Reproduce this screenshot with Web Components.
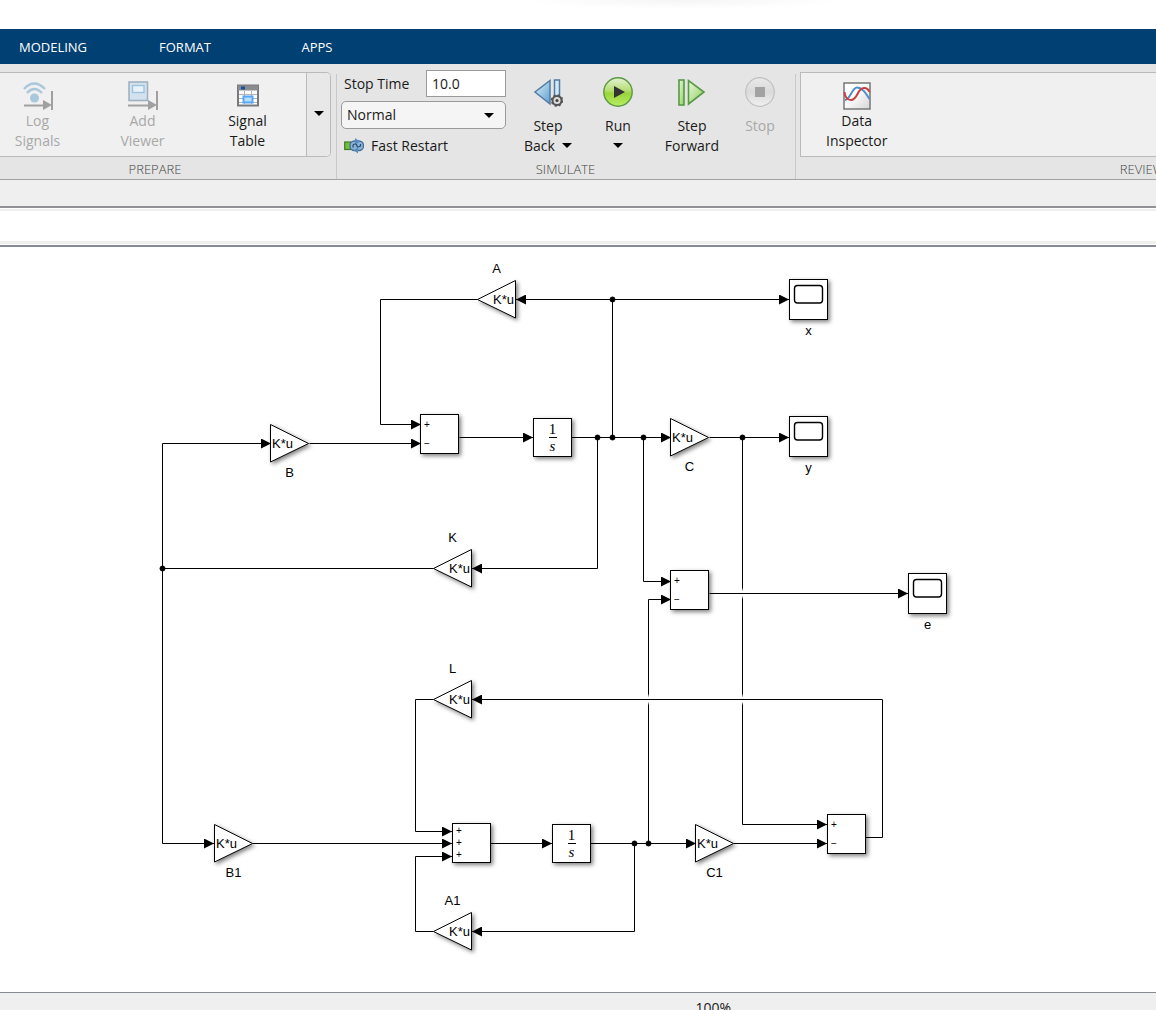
<!DOCTYPE html>
<html lang="en">
<head>
<meta charset="utf-8">
<title>Simulink</title>
<style>
html, body{
    height: 100%;
    margin: 0;
}

body{
    font-family: "Open Sans", "Noto Sans", sans-serif;
    font-size: 14px;
    line-height: 20px;
    color: #1a1a1a;
    background: #fff;
    overflow: hidden;
}

svg{
    display: block;
}
</style>
</head>
<body>
<model-window>
    <tab-strip slot="tabs">
        <a href="#modeling">MODELING</a>
        <a href="#format">FORMAT</a>
        <a href="#apps">APPS</a>
    </tab-strip>

    <tool-strip slot="tools">
        <tool-group class="prepare" caption="PREPARE">
            <tool-gallery more>
                <tool-button disabled>
                    <svg slot="icon" width="30" height="30" viewBox="0 0 30 30" fill="none">
                        <path d="M1 8Q11-3 22 8" stroke="#a9c8dc" stroke-width="2.4"/>
                        <path d="M4 12Q11 4 19 12" stroke="#a9c8dc" stroke-width="2.4"/>
                        <circle cx="11.500" cy="17" r="4.500" fill="#a9c8dc"/>
                        <path d="M1 24.500H22M29 10V29" stroke="#a0a0a0" stroke-width="2"/>
                        <path d="M20 19v10l9-5z" fill="#a0a0a0"/>
                    </svg>
                    Log<br>Signals
                </tool-button>
                <tool-button disabled>
                    <svg slot="icon" width="30" height="30" viewBox="0 0 30 30" fill="none">
                        <rect x="1" y="1" width="18.500" height="18.500" fill="#d3e2ee" stroke="#a0b2c0" stroke-width="1.600"/>
                        <rect x="4.500" y="4.500" width="11.500" height="7" fill="#e9f2f8" stroke="#9bc3dd" stroke-width="1.400"/>
                        <path d="M0 24.500H22M29 10V29" stroke="#a0a0a0" stroke-width="2"/>
                        <path d="M20 19v10l9-5z" fill="#a0a0a0"/>
                    </svg>
                    Add<br>Viewer
                </tool-button>
                <tool-button>
                    <svg slot="icon" width="30" height="30" viewBox="0 0 30 30" fill="none">
                        <rect x="5" y="4.500" width="20" height="20" fill="#fff" stroke="#77797c" stroke-width="2"/>
                        <path d="M5 4.500h20v5H5z" fill="#8a8c90"/>
                        <path d="M8 5.500h4v3H8z" fill="#164f9a"/>
                        <path d="M6 13.500H24M6 17.500H24M6 21.500H24M11.500 10V24M18.500 10V24" stroke="#b3b3b8"/>
                        <rect x="10.500" y="15.500" width="9" height="6" fill="#b9dcfb" stroke="#55a8f3" stroke-width="2"/>
                    </svg>
                    Signal<br>Table
                </tool-button>
            </tool-gallery>
        </tool-group>

        <tool-group class="simulate" caption="SIMULATE">
            <sim-options></sim-options>
            <tool-button>
                <svg slot="icon" width="30" height="30" viewBox="0 0 30 30">
                    <defs>
                        <linearGradient id="back" x1="0" x2="1" y1="0" y2="1">
                            <stop offset="0" stop-color="#dff1fb"/>
                            <stop offset="1" stop-color="#5d9fd0"/>
                        </linearGradient>
                    </defs>
                    <path d="M17 3.500V27L2 15z" fill="url(#back)" stroke="#527ba3" stroke-width="1.500"/>
                    <rect x="21.500" y="3" width="5" height="22" fill="#cfe9fa" stroke="#527ba3" stroke-width="1.500"/>
                    <circle cx="24" cy="23.500" r="4.500" fill="#ddd" stroke="#555" stroke-width="2"/>
                    <circle cx="24" cy="23.500" r="5.500" fill="none" stroke="#555" stroke-width="1.500" stroke-dasharray="2.200 2.120"/>
                    <circle cx="24" cy="23.500" r="1.600" fill="#444"/>
                </svg>
                Step<br>Back<drop-arrow class="after"></drop-arrow>
            </tool-button>
            <tool-button>
                <svg slot="icon" width="30" height="30" viewBox="0 0 30 30">
                    <defs>
                        <linearGradient id="run" x1="0" x2="0" y1="0" y2="1">
                            <stop offset="0" stop-color="#e6f2d6"/>
                            <stop offset=".45" stop-color="#b4dd70"/>
                            <stop offset=".55" stop-color="#9ad53c"/>
                            <stop offset="1" stop-color="#b9ee61"/>
                        </linearGradient>
                    </defs>
                    <circle cx="15" cy="15" r="14.200" fill="url(#run)" stroke="#5b9a43" stroke-width="1.400"/>
                    <path d="M11 9v12l11-6z" fill="#333"/>
                </svg>
                Run<br><drop-arrow></drop-arrow>
            </tool-button>
            <tool-button>
                <svg slot="icon" width="30" height="30" viewBox="0 0 30 30">
                    <defs>
                        <linearGradient id="fwd" x1="0" x2="1" y1="0" y2="1">
                            <stop offset="0" stop-color="#eaf8df"/>
                            <stop offset="1" stop-color="#8ad058"/>
                        </linearGradient>
                    </defs>
                    <rect x="2" y="3" width="5" height="25" fill="url(#fwd)" stroke="#579a45" stroke-width="1.600"/>
                    <path d="M11.500 3.500V27L27 15z" fill="url(#fwd)" stroke="#579a45" stroke-width="1.600"/>
                </svg>
                Step<br>Forward
            </tool-button>
            <tool-button disabled>
                <svg slot="icon" width="30" height="30" viewBox="0 0 30 30">
                    <defs>
                        <linearGradient id="stop" x1="0" x2="0" y1="0" y2="1">
                            <stop offset="0" stop-color="#e9e9e9"/>
                            <stop offset=".5" stop-color="#dadada"/>
                            <stop offset="1" stop-color="#f0f0f0"/>
                        </linearGradient>
                    </defs>
                    <circle cx="15" cy="15" r="14.300" fill="url(#stop)" stroke="#c0c0c0" stroke-width="1.200"/>
                    <path d="M10 10h10v10H10z" fill="#a2a2a2"/>
                </svg>
                Stop
            </tool-button>
        </tool-group>

        <tool-group class="review" caption="REVIEW">
            <tool-gallery>
                <tool-button>
                    <svg slot="icon" width="30" height="30" viewBox="0 0 30 30" fill="none">
                        <defs>
                            <linearGradient id="plot" x1="0" x2="1" y1="0" y2="1">
                                <stop offset=".4" stop-color="#fff"/>
                                <stop offset="1" stop-color="#d5d5d5"/>
                            </linearGradient>
                        </defs>
                        <rect x="2" y="2" width="26" height="26" fill="url(#plot)" stroke="#777" stroke-width="1.500"/>
                        <path d="M3 19C8 19 10 6.500 15 6.500S23 11 27.500 18" stroke="#4d8fc9" stroke-width="2"/>
                        <path d="M2.500 11C3 16 5 19 9 19C16 19 15 7 22 7Q26 7 27.500 11" stroke="#c8403e" stroke-width="2"/>
                    </svg>
                    Data<br>Inspector
                </tool-button>
            </tool-gallery>
        </tool-group>
    </tool-strip>

    <model-canvas>
        <gain-block slot="blocks" x="477" y="33" label="A" flip></gain-block>
        <scope-block slot="blocks" x="789" y="32" label="x"></scope-block>

        <gain-block slot="blocks" x="270" y="177" label="B"></gain-block>
        <sum-block slot="blocks" x="420" y="167" signs="+−"></sum-block>
        <integrator-block slot="blocks" x="533" y="171"></integrator-block>
        <gain-block slot="blocks" x="670" y="171" label="C"></gain-block>
        <scope-block slot="blocks" x="789" y="169" label="y"></scope-block>

        <gain-block slot="blocks" x="433" y="302" label="K" flip></gain-block>
        <sum-block slot="blocks" x="670" y="323" signs="+−"></sum-block>
        <scope-block slot="blocks" x="908" y="326" label="e"></scope-block>

        <gain-block slot="blocks" x="433" y="433" label="L" flip></gain-block>

        <gain-block slot="blocks" x="214" y="577" label="B1"></gain-block>
        <sum-block slot="blocks" x="452" y="576" signs="+++"></sum-block>
        <integrator-block slot="blocks" x="552" y="577"></integrator-block>
        <gain-block slot="blocks" x="695" y="577" label="C1"></gain-block>
        <sum-block slot="blocks" x="827" y="567" signs="+−"></sum-block>

        <gain-block slot="blocks" x="433" y="665" label="A1" flip></gain-block>
    </model-canvas>

    <status-bar slot="status">100%</status-bar>
</model-window>

<script>
class BaseElement extends HTMLElement {
    constructor(){
        super();
        this._shadowDom = this.attachShadow({ mode: "open" })
    }
    connectedCallback(){
        this._shadowDom.innerHTML = this.render()
    }
}

class ModelWindow extends BaseElement {
    render(){
        return `
            <style>
                :host{
                    display: flex;
                    flex-direction: column;
                    height: 100vh;
                }
                .title{
                    flex: none;
                    height: 29px;
                    background: radial-gradient(160px 9px at 59% 0, #f5f5f5, #fcfcfc 70%, #fff);
                }
                .docbar{
                    flex: none;
                    height: 26px;
                    background: #efefef;
                    border-bottom: 2px solid #8f9197;
                }
                .path{
                    flex: none;
                    height: 30px;
                    margin-top: 1px;
                    border-top: 2px solid #efeff1;
                    border-bottom: 3px solid #efeff1;
                    background: #fff;
                }
                main{
                    flex: 1;
                    display: flex;
                    min-height: 0;
                    margin-top: 1px;
                    border-top: 2px solid #868b96;
                }
            </style>
            <div class="title"></div>
            <slot name="tabs"></slot>
            <slot name="tools"></slot>
            <div class="docbar"></div>
            <div class="path"></div>
            <main><slot></slot></main>
            <slot name="status"></slot>
        `
    }
}
window.customElements.define('model-window', ModelWindow)

class TabStrip extends BaseElement {
    render(){
        return `
            <style>
                :host{
                    display: block;
                    flex: none;
                    height: 35px;
                    overflow: hidden;
                    background: #004072;
                }
                nav{
                    display: flex;
                    margin-left: -13px;
                }
                ::slotted(a){
                    width: 132px;
                    line-height: 36px;
                    font-size: 13px;
                    color: #fff;
                    text-align: center;
                    text-decoration: none;
                }
            </style>
            <nav><slot></slot></nav>
        `
    }
}
window.customElements.define('tab-strip', TabStrip)

class ToolStrip extends BaseElement {
    render(){
        return `
            <style>
                :host{
                    display: flex;
                    flex: none;
                    height: 115px;
                    overflow: hidden;
                    background: #e5e5e5;
                    border-bottom: 1px solid #a3a3a3;
                }
                ::slotted(.prepare){
                    width: 336px;
                    --caption-end: 26px;
                }
                ::slotted(.simulate){
                    width: 459px;
                    --columns: 175px 64px 76px 72px 64px;
                    --inset: 5px;
                }
                ::slotted(.review){
                    width: 694px;
                    --inset: 5px;
                }
            </style>
            <slot></slot>
        `
    }
}
window.customElements.define('tool-strip', ToolStrip)

class ToolGroup extends BaseElement {
    render(){
        return `
            <style>
                :host{
                    flex: none;
                    display: flex;
                    flex-direction: column;
                    position: relative;
                }
                :host::after{
                    content: "";
                    position: absolute;
                    top: 10px;
                    right: -1px;
                    bottom: 0;
                    border-right: 1px solid #c9c9c9;
                }
                .tools{
                    display: grid;
                    grid-template-columns: var(--columns, 1fr);
                    height: 97px;
                    padding-left: var(--inset, 0);
                }
                .caption{
                    padding-right: var(--caption-end, 0);
                    font-size: 13px;
                    font-weight: 300;
                    line-height: 20px;
                    color: #444;
                    text-align: center;
                }
            </style>
            <div class="tools"><slot></slot></div>
            <div class="caption">${this.getAttribute("caption")}</div>
        `
    }
}
window.customElements.define('tool-group', ToolGroup)

class ToolGallery extends BaseElement {
    render(){
        const more = this.hasAttribute("more")
        return `
            <style>
                :host{
                    display: flex;
                    height: 83px;
                    margin-top: 8px;
                    border: 1px solid #bababa;
                    background: #f0f0f0;
                    --tool-top: 8px;
                    --text-gap: 0;
                }
                :host([more]){
                    width: 330px;
                    border-left: 0;
                    border-radius: 0 5px 5px 0;
                    --tool-width: 75px;
                }
                :host(:not([more])) .items{
                    padding-left: 25px;
                }
                .items{
                    flex: 1;
                    display: flex;
                    gap: 30px;
                }
                button{
                    width: 24px;
                    padding: 0;
                    border: 0;
                    border-left: 1px solid #bababa;
                    border-radius: 0 4px 4px 0;
                    background: #e8e8e8;
                }
            </style>
            <div class="items"><slot></slot></div>
            ${more ? '<button aria-label="More"><drop-arrow></drop-arrow></button>' : ''}
        `
    }
}
window.customElements.define('tool-gallery', ToolGallery)

class ToolButton extends BaseElement {
    render(){
        return `
            <style>
                :host{
                    display: block;
                    width: var(--tool-width, auto);
                }
                button{
                    display: flex;
                    flex-direction: column;
                    align-items: center;
                    width: 100%;
                    padding: var(--tool-top, 13px) 0 0;
                    border: 0;
                    background: none;
                    font: inherit;
                    color: #1a1a1a;
                    white-space: nowrap;
                }
                button:disabled{
                    color: #a8a8a8;
                }
                .text{
                    display: block;
                    margin-top: var(--text-gap, 9px);
                }
            </style>
            <button ${this.hasAttribute("disabled") ? "disabled" : ""}>
                <slot name="icon"></slot>
                <span class="text"><slot></slot></span>
            </button>
        `
    }
}
window.customElements.define('tool-button', ToolButton)

class DropArrow extends BaseElement {
    render(){
        return `
            <style>
                :host{
                    display: inline-block;
                    border: 5px solid transparent;
                    border-top-color: #000;
                    border-bottom: 0;
                    vertical-align: 3px;
                    pointer-events: none;
                }
                :host(.after){
                    margin-left: 7px;
                }
            </style>
        `
    }
}
window.customElements.define('drop-arrow', DropArrow)

class SimOptions extends BaseElement {
    render(){
        return `
            <style>
                :host{
                    display: flex;
                    flex-direction: column;
                    gap: 4px;
                    width: 165px;
                    padding-top: 6px;
                    color: #1a1a1a;
                }
                .time{
                    display: flex;
                    align-items: center;
                    justify-content: space-between;
                    padding-left: 3px;
                }
                input, select{
                    box-sizing: border-box;
                    padding: 0 5px;
                    border: 1px solid #9a9a9a;
                    font: inherit;
                    color: inherit;
                }
                input{
                    width: 80px;
                    height: 27px;
                    background: #fff;
                }
                .mode{
                    display: grid;
                    align-items: center;
                }
                .mode > *{
                    grid-area: 1 / 1;
                }
                .mode drop-arrow{
                    justify-self: end;
                    margin-right: 12px;
                }
                select{
                    width: 100%;
                    height: 28px;
                    appearance: none;
                    border-radius: 5px;
                    background: #f5f5f5;
                }
                button{
                    display: flex;
                    align-items: center;
                    gap: 7px;
                    height: 26px;
                    padding: 0 3px;
                    border: 0;
                    background: none;
                    font: inherit;
                    color: inherit;
                }
            </style>
            <div class="time">
                <label for="stop">Stop Time</label>
                <input id="stop" value="10.0">
            </div>
            <div class="mode">
                <select aria-label="Simulation mode"><option>Normal</option></select>
                <drop-arrow></drop-arrow>
            </div>
            <button>
                <svg width="20" height="16" viewBox="0 0 20 16" fill="none">
                    <rect x="0.700" y="4" width="6" height="7.500" fill="#72bd3e" stroke="#41782b" stroke-width="1.200"/>
                    <rect x="6" y="3" width="13.500" height="9.500" rx="4.500" fill="#8bb3d6" stroke="#416f9c" stroke-width="1.300"/>
                    <path d="M11 0l5 3.500-5 3.500zM14 9l-4 3.500 4 3z" fill="#5c8cba"/>
                    <path d="M9 9.500V7.500Q9 6 11 6T13 8T16.500 8V6" stroke="#244a70" stroke-width="1.200"/>
                </svg>
                Fast Restart
            </button>
        `
    }
}
window.customElements.define('sim-options', SimOptions)

// Signal routes, as [path, arrow at the end]
const wires = [
    ["M612 52H515", true],
    ["M612 52H789", true],
    ["M477 52H380V177H421", true],
    ["M612 52V190", false],
    ["M162 196H271", true],
    ["M309 196H421", true],
    ["M459 190H533", true],
    ["M571 190H671", true],
    ["M709 190H789", true],
    ["M597 190V321H471", true],
    ["M433 321H162", false],
    ["M162 196V596H214", true],
    ["M643 190V334H671", true],
    ["M648 596V352H671", true],
    ["M742 190V577H827", true],
    ["M252 596H452", true],
    ["M490 596H552", true],
    ["M590 596H696", true],
    ["M733 596H827", true],
    ["M433 452H415V584H452", true],
    ["M634 596V684H471", true],
    ["M433 684H415V609H452", true]
]
// These pass over the vertical signals, which fade out around them
const bridges = [
    ["M709 346H908", true],
    ["M865 590H882V452H471", true]
]
const gaps = [[742, 346], [742, 452], [648, 452]]
const junctions = [[612, 52], [597, 190], [612, 190], [643, 190], [742, 190], [162, 321], [634, 596], [648, 596]]

class ModelCanvas extends BaseElement {
    wire([d, arrow]){
        return `<path d="${d}" ${arrow ? 'marker-end="url(#arrow)"' : ''}/>`
    }
    gap([x, y]){
        return `
            <path d="M${x} ${y - 5}v10" stroke="#fff" stroke-width="3" stroke-opacity=".5"/>
            <path d="M${x} ${y - 3}v6" stroke="#fff" stroke-width="3"/>
        `
    }
    render(){
        return `
            <style>
                :host{
                    display: block;
                    flex: 1;
                    position: relative;
                    overflow: hidden;
                    background: #fff;
                    font-family: "Liberation Sans", Arial, sans-serif;
                    font-size: 13px;
                    line-height: 16px;
                    color: #000;
                }
                svg{
                    position: absolute;
                    width: 100%;
                    height: 100%;
                }
            </style>
            <svg>
                <defs>
                    <marker id="arrow" markerUnits="userSpaceOnUse" markerWidth="10" markerHeight="10" refX="10.500" refY="5" orient="auto">
                        <path d="M0 0L10 5L0 10z" fill="#000"/>
                    </marker>
                </defs>
                <g transform="translate(.5 .5)" fill="none" stroke="#000">
                    ${wires.map(this.wire).join("")}
                    ${gaps.map(this.gap).join("")}
                    ${bridges.map(this.wire).join("")}
                    ${junctions.map(([x, y]) => `<circle cx="${x}" cy="${y}" r="2.500" fill="#000"/>`).join("")}
                </g>
            </svg>
            <slot name="blocks"></slot>
        `
    }
}
window.customElements.define('model-canvas', ModelCanvas)

const blockStyle = `
:host{
    position: absolute;
    width: 39px;
}

.shape{
    display: block;
    overflow: visible;
    filter: drop-shadow(2px 2px 2px rgba(0,0,0,.5));
}

.body{
    display: grid;
}

.body > *{
    grid-area: 1 / 1;
}

.text{
    z-index: 1;
}

.label{
    position: absolute;
    top: 100%;
    left: 0;
    right: 0;
    padding-top: 2px;
    text-align: center;
}`

class BlockElement extends BaseElement {
    connectedCallback(){
        super.connectedCallback()
        this.style.left = this.getAttribute("x") + "px"
        this.style.top = this.getAttribute("y") + "px"
    }
    get label(){
        return this.hasAttribute("label") ? `<div class="label">${this.getAttribute("label")}</div>` : ""
    }
}

class GainBlock extends BlockElement {
    render(){
        const points = this.hasAttribute("flip") ? "38.500,0.500 38.500,38 0.500,19.500" : "0.500,0.500 0.500,38 38.500,19.500"
        return `
            <style>
                ${blockStyle}
                .text{
                    align-self: center;
                    padding-left: 2px;
                }
                :host([flip]) .text{
                    padding: 0 2px 0 0;
                    text-align: right;
                }
                :host([flip]) .label{
                    top: auto;
                    bottom: 100%;
                    padding: 0 0 3px;
                }
            </style>
            <div class="body">
                <svg class="shape" width="39" height="39"><polygon points="${points}" fill="#fff" stroke="#000"/></svg>
                <span class="text">K*u</span>
            </div>
            ${this.label}
        `
    }
}
window.customElements.define('gain-block', GainBlock)

class SumBlock extends BlockElement {
    render(){
        const signs = [...this.getAttribute("signs")]
        return `
            <style>
                ${blockStyle}
                .text{
                    display: flex;
                    flex-direction: column;
                    justify-content: ${signs.length > 2 ? "center" : "flex-start"};
                    gap: ${signs.length > 2 ? 0 : 7}px;
                    padding: ${signs.length > 2 ? 0 : 5}px 0 0 4px;
                    font-size: 10px;
                    line-height: 12px;
                }
            </style>
            <div class="body">
                <svg class="shape" width="39" height="40"><rect x="0.500" y="0.500" width="38" height="39" fill="#fff" stroke="#000"/></svg>
                <div class="text">${signs.map(s => `<span>${s}</span>`).join("")}</div>
            </div>
        `
    }
}
window.customElements.define('sum-block', SumBlock)

class IntegratorBlock extends BlockElement {
    render(){
        return `
            <style>
                ${blockStyle}
                .text{
                    place-self: center;
                    display: grid;
                    width: 8px;
                    font-family: "Liberation Serif", "Times New Roman", serif;
                    font-size: 15px;
                    line-height: 16px;
                    text-align: center;
                }
                .text i{
                    border-top: 1px solid #000;
                }
            </style>
            <div class="body">
                <svg class="shape" width="39" height="39"><rect x="0.500" y="0.500" width="38" height="38" fill="#fff" stroke="#000"/></svg>
                <div class="text"><span>1</span><i>s</i></div>
            </div>
        `
    }
}
window.customElements.define('integrator-block', IntegratorBlock)

class ScopeBlock extends BlockElement {
    render(){
        return `
            <style>
                ${blockStyle}
                .label{
                    padding-top: 3px;
                }
            </style>
            <div class="body">
                <svg class="shape" width="39" height="41">
                    <rect x="0.500" y="0.500" width="38" height="40" fill="#fff" stroke="#000"/>
                    <rect x="5.500" y="6.500" width="28" height="17.500" rx="3" fill="#fff" stroke="#000" stroke-width="1.400"/>
                </svg>
            </div>
            ${this.label}
        `
    }
}
window.customElements.define('scope-block', ScopeBlock)

class StatusBar extends BaseElement {
    render(){
        return `
            <style>
                :host{
                    display: grid;
                    grid-template-columns: 60% 1fr;
                    flex: none;
                    height: 17px;
                    border-top: 1px solid #868b96;
                    background: #efefef;
                    line-height: 30px;
                }
                span{
                    grid-column: 2;
                    padding-left: 2px;
                }
            </style>
            <span><slot></slot></span>
        `
    }
}
window.customElements.define('status-bar', StatusBar)
</script>
</body>
</html>
